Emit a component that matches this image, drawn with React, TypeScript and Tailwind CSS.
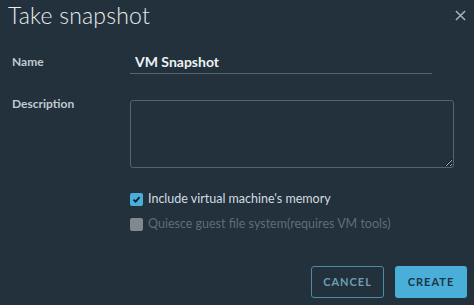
import React, { useState } from "react";

export default function App() {
  const [name, setName] = useState("VM Snapshot");
  const [memory, setMemory] = useState(true);

  return (
    <div className="flex h-[305px] w-[474px] flex-col bg-[#22313b] font-['Lato','Open_Sans',sans-serif] text-[#c9d3d9]">
      {/* Header */}
      <div className="flex h-[30px] items-center justify-between pl-[8px] pr-[8px]">
        <h1 className="text-[23px] font-light leading-[30px] tracking-[0.2px] text-[#e8edf0]">
          Take snapshot
        </h1>
        <button className="flex h-[12px] w-[12px] items-center justify-center text-[#a9b6bd]">
          <svg width="11" height="11" viewBox="0 0 12 12" fill="none" stroke="currentColor" strokeWidth="1.6">
            <path d="M1 1L11 11M11 1L1 11" />
          </svg>
        </button>
      </div>

      {/* Name */}
      <div className="mt-[20px] flex h-[24px] items-center">
        <label className="w-[130px] pl-[12px] text-[12px] font-bold text-[#bfcad1]">Name</label>
        <div className="flex h-[24px] w-[302px] items-center border-b border-[#56656d] pl-[5px]">
          <input
            value={name}
            onChange={(e) => setName(e.target.value)}
            className="w-full bg-transparent text-[14px] font-bold text-[#eef2f4] outline-none"
          />
        </div>
      </div>

      {/* Description */}
      <div className="mt-[22px] flex items-start">
        <label className="w-[130px] pl-[12px] text-[12px] font-bold leading-[16px] text-[#bfcad1]">
          Description
        </label>
        <textarea className="mt-[4px] h-[68px] w-[324px] rounded-[3px] border border-[#55646c] bg-transparent p-1 text-[12px] text-[#eef2f4] outline-none [color-scheme:dark]" />
      </div>

      {/* Options */}
      <div className="ml-[130px] mt-[19px] flex flex-col">
        <label className="flex h-[24px] items-center gap-[5px] text-[12.5px] text-[#d3dce1]">
          <span
            onClick={() => setMemory(!memory)}
            className={
              "flex h-[13px] w-[13px] items-center justify-center rounded-[2px] " +
              (memory ? "bg-[#49afd9]" : "border border-[#8c9ba3]")
            }
          >
            {memory && (
              <svg width="9" height="9" viewBox="0 0 9 9" fill="none" stroke="#10202a" strokeWidth="1.8">
                <path d="M1.5 4.6L3.6 6.6L7.6 2.2" />
              </svg>
            )}
          </span>
          Include virtual machine's memory
        </label>
        <label className="mt-[1px] flex h-[24px] items-center gap-[5px] text-[12.5px] text-[#5e6e78]">
          <span className="h-[13px] w-[13px] rounded-[2px] bg-[#7f898f]" />
          Quiesce guest file system(requires VM tools)
        </label>
      </div>

      {/* Footer */}
      <div className="mt-[30px] flex justify-end gap-[11px] pr-[7px]">
        <button className="h-[32px] w-[73px] rounded-[3px] border border-[#4c8aa5] text-[11px] font-bold tracking-[1px] text-[#6c9db3]">
          CANCEL
        </button>
        <button className="h-[32px] w-[72px] rounded-[3px] bg-[#49afd9] text-[11px] font-bold tracking-[1px] text-[#1b3544]">
          CREATE
        </button>
      </div>
    </div>
  );
}
